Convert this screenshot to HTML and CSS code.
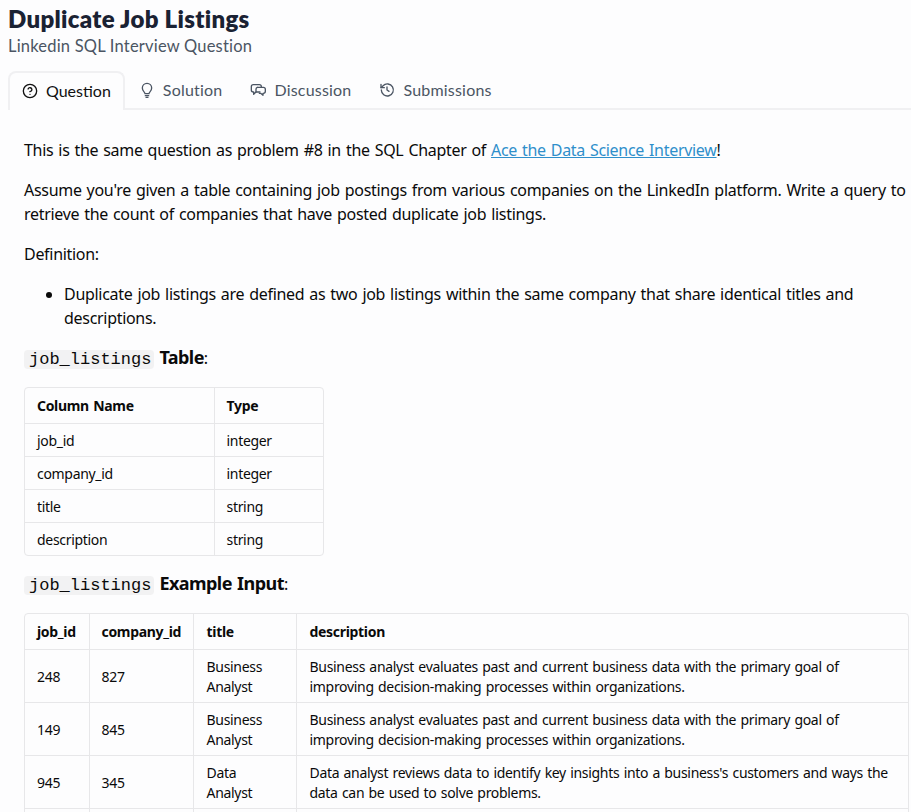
FILE: index.html
```html
<!DOCTYPE html>
<html lang="en">
<head>
<meta charset="utf-8">
<title>Duplicate Job Listings</title>
<link rel="stylesheet" href="styles.css">
</head>
<body>
<header class="head">
  <h1 class="title">Duplicate Job Listings</h1>
  <p class="subtitle">Linkedin SQL Interview Question</p>
</header>
<nav class="tabs">
  <a class="tab tab-active">
    <svg class="icon" viewBox="0 0 24 24"><circle cx="12" cy="12" r="10"/><path d="M9.100 9a3 3 0 0 1 5.800 1c0 2-3 3-3 3"/><path d="M12 17h.01"/></svg>
    <span>Question</span>
  </a>
  <a class="tab">
    <svg class="icon" viewBox="0 0 24 24"><path d="M9.500 20.500h5M10.500 23h3"/><path d="M9 17.500c0-2.500-4-3.500-4-8.500a7 7 0 0 1 14 0c0 5-4 6-4 8.500z"/></svg>
    <span>Solution</span>
  </a>
  <a class="tab">
    <svg class="icon" viewBox="0 0 24 24"><path d="M15 15H9l-3.500 3.500V15H5a3 3 0 0 1-3-3V7a3 3 0 0 1 3-3h9a3 3 0 0 1 3 3v1"/><path d="M11 8h9a3 3 0 0 1 3 3v3a3 3 0 0 1-3 3h-.5v3L16 17h-2"/><path d="M11 8a3 3 0 0 0-2 3v4"/></svg>
    <span>Discussion</span>
  </a>
  <a class="tab">
    <svg class="icon" viewBox="0 0 24 24"><path d="M3.500 12a9 9 0 1 0 2.600-6.400L3 8.500"/><path d="M3 3.500v5h5"/><path d="M12 7.500V12l3 2"/></svg>
    <span>Submissions</span>
  </a>
</nav>
<main class="content">
  <p>This is the same question as problem #8 in the SQL Chapter of <a class="link">Ace the Data Science Interview</a>!</p>
  <p>Assume you're given a table containing job postings from various companies on the LinkedIn platform. Write a query to retrieve the count of companies that have posted duplicate job listings.</p>
  <p>Definition:</p>
  <ul class="list"><li>Duplicate job listings are defined as two job listings within the same company that share identical titles and descriptions.</li></ul>
  <p class="tbl-head"><code class="code">job_listings</code> <strong class="strong">Table</strong>:</p>
  <div class="table-wrap table-small">
    <table>
      <thead><tr><th class="c-name">Column Name</th><th>Type</th></tr></thead>
      <tbody>
        <tr><td>job_id</td><td>integer</td></tr>
        <tr><td>company_id</td><td>integer</td></tr>
        <tr><td>title</td><td>string</td></tr>
        <tr><td>description</td><td>string</td></tr>
      </tbody>
    </table>
  </div>
  <p class="tbl-head"><code class="code">job_listings</code> <strong class="strong">Example Input</strong>:</p>
  <div class="table-wrap table-wide">
    <table>
      <thead><tr><th class="c1">job_id</th><th class="c2">company_id</th><th class="c3">title</th><th>description</th></tr></thead>
      <tbody>
        <tr><td>248</td><td>827</td><td>Business Analyst</td><td>Business analyst evaluates past and current business data with the primary goal of improving decision-making processes within organizations.</td></tr>
        <tr><td>149</td><td>845</td><td>Business Analyst</td><td>Business analyst evaluates past and current business data with the primary goal of improving decision-making processes within organizations.</td></tr>
        <tr><td>945</td><td>345</td><td>Data Analyst</td><td>Data analyst reviews data to identify key insights into a business's customers and ways the data can be used to solve problems.</td></tr>
        <tr class="row-clipped"><td></td><td></td><td></td><td></td></tr>
      </tbody>
    </table>
  </div>
</main>
</body>
</html>
```
FILE: styles.css
```css
html, body { margin: 0; padding: 0; height: 812px; overflow: hidden; }
body { background: #fdfdfe; color: #0a0a0a; font-family: "Noto Sans", sans-serif; font-size: 16px; line-height: 24px; letter-spacing: -0.3px; word-spacing: 1.1px; }
.head { padding: 3px 8px 0; letter-spacing: 0; word-spacing: 0; }
.title { margin: 0; font: 800 24px/32px "Lato", "Open Sans", sans-serif; letter-spacing: 0.3px; color: #1a2233; }
.subtitle { margin: 0; font: 400 16.5px/22px "Lato", "Open Sans", sans-serif; letter-spacing: 0.2px; color: #4b5563; }
.tabs { display: flex; margin: 14px 0 0 8px; height: 37px; border-bottom: 2px solid #f0f0f2; letter-spacing: 0; word-spacing: 0; }
.tab { display: flex; align-items: center; gap: 8px; padding: 0 12px 2px; height: 37px; box-sizing: border-box; color: #4b5563; font-family: "Lato", sans-serif; font-size: 16px; letter-spacing: 0.2px; border: 2px solid transparent; border-bottom: 0; }
.tab-active { color: #111; letter-spacing: 0; background: #fdfdfe; border-color: #f0f0f2; border-radius: 8px 8px 0 0; height: 39px; padding-top: 0; padding-bottom: 1px; position: relative; }
.icon { width: 16px; height: 16px; fill: none; stroke: currentColor; stroke-width: 2; stroke-linecap: round; stroke-linejoin: round; }
.content { padding: 0 0 0 24px; }
.content p { margin: 16px 0 0; }
.content p:first-child { margin-top: 28px; }
.link { color: #2f8fcb; text-decoration: underline; }
.list { margin: 16px 0 0; padding: 0 40px; }
.code { font-family: "Liberation Mono", monospace; font-size: 17px; line-height: 1; letter-spacing: 0; word-spacing: 0; background: #f2f2f3; border-radius: 4px; padding: 0 3px 0 5px; }
.strong { font-size: 18px; line-height: 1; font-weight: 700; letter-spacing: -0.55px; }
.table-wrap { margin-top: 17px; border: 1px solid #e7e7e9; border-radius: 4px; }
.table-small { width: 298px; }
.table-wide { width: 883px; }
table { border-collapse: collapse; table-layout: fixed; width: 100%; font-size: 14px; line-height: 20px; letter-spacing: -0.31px; word-spacing: 0.96px; }
th, td { box-sizing: border-box; padding: 6px 12px; text-align: left; border-left: 1px solid #e7e7e9; border-top: 1px solid #e7e7e9; }
td { padding: 7px 12px 5px; }
th { font-weight: 700; line-height: 23px; border-top: 0; }
th:first-child, td:first-child { border-left: 0; }
.table-wide th:nth-child(n+3), .table-wide td:nth-child(n+3) { padding-left: 13px; }
.row-clipped td { height: 53px; }
.c-name { width: 189px; }
.c1 { width: 64px; }
.c2 { width: 104px; }
.c3 { width: 103px; }
```
